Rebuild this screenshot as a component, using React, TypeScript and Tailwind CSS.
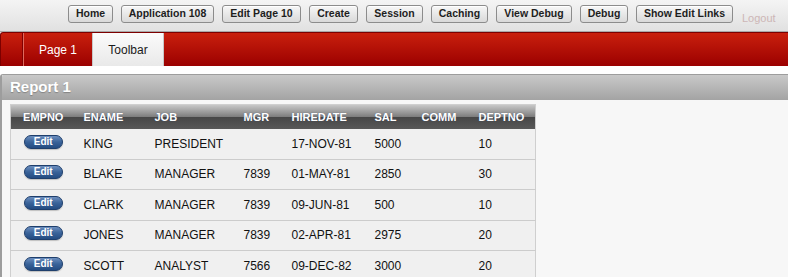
import React from "react";

// developer toolbar buttons, widths read off the screen
const devLinks = [
  { label: "Home", w: "w-[45px]" },
  { label: "Application 108", w: "w-[93px]" },
  { label: "Edit Page 10", w: "w-[79px]" },
  { label: "Create", w: "w-[49px]" },
  { label: "Session", w: "w-[57px]" },
  { label: "Caching", w: "w-[57px]" },
  { label: "View Debug", w: "w-[76px]" },
  { label: "Debug", w: "w-[48px]" },
  { label: "Show Edit Links", w: "w-[97px]" },
];

const columns = [
  { label: "EMPNO", w: "w-[65px]" },
  { label: "ENAME", w: "w-[71px]" },
  { label: "JOB", w: "w-[89px]" },
  { label: "MGR", w: "w-[48px]" },
  { label: "HIREDATE", w: "w-[83px]" },
  { label: "SAL", w: "w-[47px]" },
  { label: "COMM", w: "w-[57px]" },
  { label: "DEPTNO", w: "w-[65px]" },
];

const rows = [
  ["KING", "PRESIDENT", "", "17-NOV-81", "5000", "", "10"],
  ["BLAKE", "MANAGER", "7839", "01-MAY-81", "2850", "", "30"],
  ["CLARK", "MANAGER", "7839", "09-JUN-81", "500", "", "10"],
  ["JONES", "MANAGER", "7839", "02-APR-81", "2975", "", "20"],
  ["SCOTT", "ANALYST", "7566", "09-DEC-82", "3000", "", "20"],
];

export default function App() {
  return (
    <div className="h-[277px] w-[788px] overflow-hidden bg-white font-['Liberation_Sans',Arial,sans-serif]">
      {/* Developer toolbar */}
      <div className="flex h-[32px] items-start gap-2 border-b border-[#a9a9a9] bg-[linear-gradient(#f4f4f4,#e1e1e1)] pl-[68px] pt-[5px]">
        {devLinks.map((l) => (
          <button
            key={l.label}
            className={`${l.w} flex h-[18px] items-center justify-center rounded-[3px] border border-[#8c8c8c] bg-[linear-gradient(#f7f7f7,#d9d9d9)] text-[10.5px] font-bold text-[#1e1e1e] shadow-[inset_0_1px_0_#fff]`}
          >
            {l.label}
          </button>
        ))}
        <span className="ml-px pt-[8px] text-[11px] leading-none text-[#cdb6b6]">Logout</span>
      </div>

      {/* Tabs */}
      <div className="flex h-[34px] items-stretch">
        <div className="flex flex-1 items-stretch overflow-hidden rounded-tl-[3px] border-l border-t border-[#7d0000] bg-[linear-gradient(#c9200d,#9b0000)]">
          <div className="w-[22px] border-r border-[#820000]" />
          <div className="flex w-[69px] items-center justify-center border-l border-[#e06a5e] text-[12px] text-white">
            Page 1
          </div>
          <div className="-mt-px flex w-[72px] items-center justify-center border-x border-t border-[#c8c8c8] bg-[linear-gradient(#fbfbfb,#e9e9e9)] text-[12px] text-[#1a1a1a]">
            Toolbar
          </div>
        </div>
      </div>

      {/* Report region */}
      <div className="mt-[8px] overflow-hidden rounded-tl-[3px] border-l-2 border-t border-[#9d9d9d]">
        <div className="flex h-[25px] items-center bg-[linear-gradient(#c9c9c9,#a3a3a3)] pl-[8px] text-[15px] font-bold text-white [text-shadow:0_1px_1px_rgba(0,0,0,0.25)]">
          Report 1
        </div>
        <div className="h-[200px] bg-[#f7f7f7] pl-[8px] pt-[4px]">
          <table className="table-fixed border-collapse border border-[#cfcfcf] bg-[#f0f0f0] text-[12px] text-[#111]">
            <thead>
              <tr className="h-[24px] bg-[linear-gradient(#c7c7c7,#7c7c7c_50%,#474747_52%,#585858)]">
                {columns.map((c, i) => (
                  <th
                    key={c.label}
                    className={`${c.w} p-0 text-[11px] font-bold text-white [text-shadow:0_0_1px_rgba(40,60,110,0.6)] ${i === 0 ? "text-center" : "pl-[8px] text-left"}`}
                  >
                    {c.label}
                  </th>
                ))}
              </tr>
            </thead>
            <tbody>
              {rows.map((r) => (
                <tr key={r[0]} className="h-[30.5px] border-b border-[#cccccc]">
                  <td className="p-0">
                    <div className="flex justify-center pb-[4px]">
                      <span className="flex h-[14px] w-[39px] items-center justify-center rounded-full border border-[#1f3f6c] bg-[linear-gradient(#6d8fbf,#3a6399_50%,#244c82)] text-[10px] font-bold leading-none text-white shadow-[0_1px_1px_rgba(0,0,0,0.2)]">
                        Edit
                      </span>
                    </div>
                  </td>
                  {r.map((v, j) => (
                    <td key={j} className="p-0 pl-[8px]">
                      {v}
                    </td>
                  ))}
                </tr>
              ))}
            </tbody>
          </table>
        </div>
      </div>
    </div>
  );
}
